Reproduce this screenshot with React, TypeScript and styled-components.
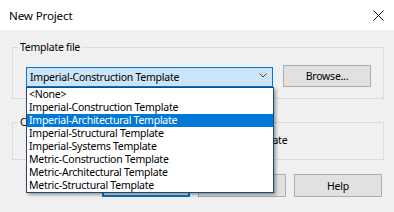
import React from 'react';
import styled, { createGlobalStyle, css } from 'styled-components';

const GlobalStyle = createGlobalStyle`
  html, body {
    margin: 0;
    padding: 0;
    background: #f0f0f0;
  }
  body {
    font-family: "Noto Sans", "Open Sans", sans-serif;
    font-size: 10.5px;
    letter-spacing: -0.25px;
    color: #000;
  }
`;

const templates = [
  '<None>',
  'Imperial-Construction Template',
  'Imperial-Architectural Template',
  'Imperial-Structural Template',
  'Imperial-Systems Template',
  'Metric-Construction Template',
  'Metric-Architectural Template',
  'Metric-Structural Template',
];

const Window = styled.div`
  width: 394px;
  height: 212px;
  overflow: hidden;
  background: #f0f0f0;
  display: flex;
  flex-direction: column;
`;

const TitleBar = styled.div`
  height: 30px;
  flex: none;
  background: #fff;
  display: flex;
  align-items: center;
  justify-content: space-between;
  padding: 0 10px 0 9px;
`;

const Title = styled.span`
  font-size: 11.6px;
  letter-spacing: -0.15px;
`;

const Body = styled.div`
  padding: 9px 10px 0 12px;
  display: flex;
  flex-direction: column;
`;

const Group = styled.fieldset<{ $gap?: number }>`
  margin: ${(p) => p.$gap ?? 0}px 0 0 0;
  border: 1px solid #dcdcdc;
  padding: 0 11px 11px 13px;
  min-width: 0;
`;

const Caption = styled.legend`
  margin-left: -8px;
  padding: 0 2px;
  line-height: 16px;
`;

const PickRow = styled.div`
  margin-top: 10px;
  display: flex;
  align-items: flex-end;
  gap: 10px;
`;

const Combo = styled.div`
  position: relative;
  width: 247px;
  height: 20px;
  box-sizing: border-box;
  border: 1px solid #0078d7;
  background: #cce4f7;
  display: flex;
  align-items: center;
  justify-content: space-between;
  padding: 0 4px 0 3px;
`;

const Chevron = styled.svg`
  margin-top: -3px;
  margin-right: 1px;
`;

const DropList = styled.ul`
  position: absolute;
  top: calc(100% + 1px);
  left: -1px;
  width: 248px;
  box-sizing: border-box;
  margin: 0;
  padding: 0;
  list-style: none;
  background: #fff;
  border: 1px solid #1f4a74;
  box-shadow: 2px 2px 3px rgba(0, 0, 0, 0.35);
  z-index: 2;
`;

const Option = styled.li<{ $active?: boolean }>`
  height: 13px;
  line-height: 13px;
  padding-left: 2px;
  white-space: nowrap;
  ${(p) =>
    p.$active &&
    css`
      background: #0078d7;
      color: #fff;
    `}
`;

const Button = styled.button<{ $default?: boolean }>`
  width: 88px;
  height: ${(p) => (p.$default === undefined ? 23 : 23)}px;
  box-sizing: border-box;
  margin: 0;
  padding: 0;
  font: inherit;
  letter-spacing: inherit;
  color: #000;
  background: #e1e1e1;
  border: 1px solid #adadad;
  ${(p) =>
    p.$default &&
    css`
      border-color: #0078d7;
      box-shadow: inset 0 0 0 1px #0078d7;
    `}
`;

const BrowseButton = styled(Button)`
  height: 22px;
`;

const RadioRow = styled.div`
  margin-top: 2px;
  display: grid;
  grid-template-columns: 167px auto;
  align-items: center;
  height: 16px;
`;

const RadioItem = styled.label`
  display: flex;
  align-items: center;
  gap: 4px;
`;

const RadioDot = styled.span<{ $on?: boolean }>`
  width: 13px;
  height: 13px;
  box-sizing: border-box;
  border-radius: 50%;
  border: 1px solid #333;
  background: #fff;
  display: flex;
  align-items: center;
  justify-content: center;
  &::after {
    content: '';
    width: 5px;
    height: 5px;
    border-radius: 50%;
    background: ${(p) => (p.$on ? '#000' : 'transparent')};
  }
`;

const ButtonRow = styled.div`
  margin: 14px 2px 0 0;
  display: flex;
  justify-content: flex-end;
  gap: 8px;
`;

export default function App() {
  return (
    <>
      <GlobalStyle />
      <Window>
        <TitleBar>
          <Title>New Project</Title>
          <svg width="11" height="11" viewBox="0 0 11 11">
            <path d="M0.5 0.5 L10.5 10.5 M10.5 0.5 L0.5 10.5" stroke="#111" strokeWidth="1" />
          </svg>
        </TitleBar>
        <Body>
          <Group>
            <Caption>Template file</Caption>
            <PickRow>
              <Combo>
                <span>Imperial-Construction Template</span>
                <Chevron width="8" height="5" viewBox="0 0 8 5">
                  <path d="M0.5 0.5 L4 4 L7.5 0.5" fill="none" stroke="#444" strokeWidth="1" />
                </Chevron>
                <DropList>
                  {templates.map((t, i) => (
                    <Option key={t} $active={i === 2}>
                      {t}
                    </Option>
                  ))}
                </DropList>
              </Combo>
              <BrowseButton>Browse...</BrowseButton>
            </PickRow>
          </Group>
          <Group $gap={15}>
            <Caption>Create new</Caption>
            <RadioRow>
              <RadioItem>
                <RadioDot $on />
                Project
              </RadioItem>
              <RadioItem>
                <RadioDot />
                Project template
              </RadioItem>
            </RadioRow>
          </Group>
          <ButtonRow>
            <Button $default>OK</Button>
            <Button>Cancel</Button>
            <Button>Help</Button>
          </ButtonRow>
        </Body>
      </Window>
    </>
  );
}
